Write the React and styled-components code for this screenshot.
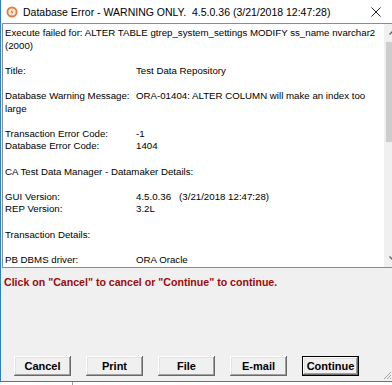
import React from "react";
import styled, { createGlobalStyle } from "styled-components";

const GlobalStyle = createGlobalStyle`
  body {
    margin: 0;
    background: #ffffff;
    overflow: hidden;
  }
`;

const details = [
  { type: "text", text: "Execute failed for: ALTER TABLE gtrep_system_settings MODIFY ss_name nvarchar2 (2000)" },
  { type: "blank" },
  { type: "pair", label: "Title:", value: "Test Data Repository" },
  { type: "blank" },
  { type: "pair", label: "Database Warning Message:", value: "ORA-01404: ALTER COLUMN will make an index too large" },
  { type: "blank" },
  { type: "pair", label: "Transaction Error Code:", value: "-1" },
  { type: "pair", label: "Database Error Code:", value: "1404" },
  { type: "blank" },
  { type: "text", text: "CA Test Data Manager - Datamaker Details:" },
  { type: "blank" },
  { type: "pair", label: "GUI Version:", value: "4.5.0.36   (3/21/2018 12:47:28)" },
  { type: "pair", label: "REP Version:", value: "3.2L" },
  { type: "blank" },
  { type: "text", text: "Transaction Details:" },
  { type: "blank" },
  { type: "pair", label: "PB DBMS driver:", value: "ORA Oracle" },
];

const buttons = ["Cancel", "Print", "File", "E-mail", "Continue"];

const App = () => {
  return (
    <>
      <GlobalStyle />
      <Window>
        <TitleBar>
          <AppIcon viewBox="0 0 12 12">
            <circle cx="6" cy="6" r="5.5" fill="#e87a3c" />
            <circle cx="6" cy="6" r="3.6" fill="#fdf3ea" />
            <path d="M6.6 2.8 L4.6 6.4 L6 6.4 L5.4 9.2 L7.4 5.6 L6 5.6 Z" fill="#d9611e" />
          </AppIcon>
          <Title>Database Error - WARNING ONLY.&nbsp; 4.5.0.36 (3/21/2018 12:47:28)</Title>
          <CloseIcon viewBox="0 0 10 10">
            <path d="M0.5 0.5 L9.5 9.5 M9.5 0.5 L0.5 9.5" stroke="#222" strokeWidth="1" />
          </CloseIcon>
        </TitleBar>
        <Body>
          <TextBox>
            <TextContent>
              {details.map((d, i) => {
                if (d.type === "blank") return <Line key={i}>&nbsp;</Line>;
                if (d.type === "text") return <Line key={i}>{d.text}</Line>;
                return (
                  <Line key={i}>
                    <Label>{d.label}</Label>
                    {d.value}
                  </Line>
                );
              })}
            </TextContent>
            <ScrollBar>
              <ArrowBox>
                <Chevron viewBox="0 0 8 5">
                  <path d="M0.5 4.5 L4 1 L7.5 4.5" stroke="#606060" strokeWidth="1.3" fill="none" />
                </Chevron>
              </ArrowBox>
              <Track>
                <Thumb />
              </Track>
              <ArrowBox>
                <Chevron viewBox="0 0 8 5">
                  <path d="M0.5 0.5 L4 4 L7.5 0.5" stroke="#606060" strokeWidth="1.3" fill="none" />
                </Chevron>
              </ArrowBox>
            </ScrollBar>
          </TextBox>
          <Prompt>Click on "Cancel" to cancel or "Continue" to continue.</Prompt>
          <ButtonRow>
            {buttons.map((b) => (
              <DlgButton key={b} $default={b === "Continue"}>
                {b}
              </DlgButton>
            ))}
          </ButtonRow>
          <Grip viewBox="0 0 10 10">
            <path d="M9 2 L2 9 M9 5 L5 9 M9 8 L8 9" stroke="#a0a0a0" strokeWidth="1" />
          </Grip>
        </Body>
      </Window>
      <Behind>
        <BehindText>ORA COLUMN will make</BehindText>
      </Behind>
    </>
  );
};

const Window = styled.div`
  width: 400px;
  height: 381px;
  background: #f0f0f0;
  border-left: 1px solid #2b7fcf;
  border-bottom: 1px solid #2b7fcf;
  display: flex;
  flex-direction: column;
  font-family: "Liberation Sans", Arial, sans-serif;
`;

const TitleBar = styled.div`
  height: 23px;
  background: #ffffff;
  display: flex;
  align-items: center;
  padding-left: 5px;
  flex-shrink: 0;
`;

const AppIcon = styled.svg`
  width: 12px;
  height: 12px;
  margin-right: 5px;
`;

const Title = styled.div`
  font-family: "Liberation Sans", Arial, sans-serif;
  font-size: 10.5px;
  color: #000;
  white-space: nowrap;
  flex: 1;
`;

const CloseIcon = styled.svg`
  width: 10px;
  height: 10px;
  margin-right: 20px;
`;

const Body = styled.div`
  flex: 1;
  display: flex;
  flex-direction: column;
  padding-left: 1px;
  position: relative;
`;

const TextBox = styled.div`
  height: 243px;
  border: 1px solid #8c8c8c;
  border-right: none;
  background: #ffffff;
  display: flex;
  flex-shrink: 0;
`;

const TextContent = styled.div`
  flex: 1;
  overflow: hidden;
  padding: 3px 3px 0 2px;
  font-size: 9.7px;
  line-height: 12.6px;
  color: #000;
`;

const Line = styled.div`
  white-space: pre-wrap;
`;

const Label = styled.span`
  display: inline-block;
  width: 131px;
  white-space: nowrap;
`;

const ScrollBar = styled.div`
  width: 17px;
  background: #f0f0f0;
  display: flex;
  flex-direction: column;
`;

const ArrowBox = styled.div`
  height: 17px;
  display: flex;
  align-items: center;
  justify-content: center;
`;

const Chevron = styled.svg`
  width: 8px;
  height: 5px;
`;

const Track = styled.div`
  flex: 1;
  padding: 1px 2px;
`;

const Thumb = styled.div`
  height: 100px;
  background: #cdcdcd;
`;

const Prompt = styled.div`
  margin-top: 8px;
  padding-left: 2px;
  font-size: 10.6px;
  font-weight: bold;
  color: #9c0a0a;
`;

const ButtonRow = styled.div`
  display: flex;
  gap: 15px;
  margin-top: 68px;
  padding-left: 12px;
`;

const DlgButton = styled.button`
  width: 57px;
  height: 20px;
  padding: 0;
  background: #f0f0f0;
  font-family: "Liberation Sans", Arial, sans-serif;
  font-size: 11px;
  font-weight: bold;
  color: #000;
  border: ${(p) => (p.$default ? "1px solid #000" : "none")};
  box-shadow: inset -1px -1px #696969, inset 1px 1px #ffffff,
    inset -2px -2px #a0a0a0, inset 2px 2px #e3e3e3;
`;

const Grip = styled.svg`
  position: absolute;
  right: 9px;
  bottom: 1px;
  width: 10px;
  height: 10px;
`;

const Behind = styled.div`
  height: 6px;
  margin-left: 72px;
  border-left: 1px solid #9a9a9a;
  overflow: hidden;
`;

const BehindText = styled.div`
  font-family: "Liberation Sans", Arial, sans-serif;
  font-size: 11px;
  line-height: 12px;
  color: #b8b8b8;
  padding-left: 6px;
  margin-top: 1px;
`;

export default App;
